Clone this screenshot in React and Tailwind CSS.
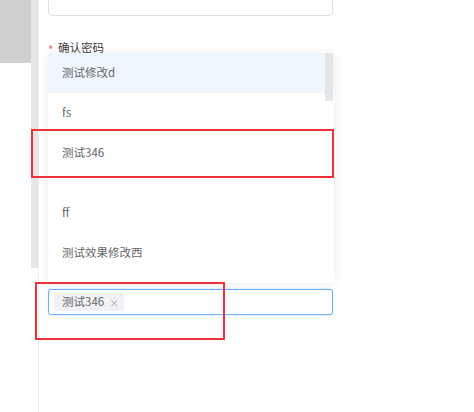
import React from "react";

const font = { fontFamily: '"Noto Sans CJK SC", "Noto Sans", sans-serif' };

export default function App() {
  return (
    <div
      className="relative flex w-[474px] h-[412px] overflow-hidden bg-white text-[#606266]"
      style={font}
    >
      {/* left sidebar */}
      <div className="w-[31px] shrink-0 flex flex-col">
        <div className="h-[63px] bg-[#cfcfcf]" />
      </div>
      <div className="w-[7px] shrink-0 flex flex-col">
        <div className="h-[268px] bg-[#e6e6e6]" />
      </div>
      {/* main */}
      <div className="flex-1 border-l border-[#efefef] pl-[9px] flex flex-col">
        <div className="w-[285px] h-[40px] -mt-[24px] border border-[#dcdfe6] rounded-[4px] bg-white" />
        <div className="mt-[24px] flex items-center h-[16px] text-[11.5px] leading-none">
          <span className="text-[#f56c6c] w-[10px] text-[12px] pt-[3px]">*</span>
          <span className="text-[#404040]">确认密码</span>
        </div>
        <div className="mt-[233px] w-[285px] h-[26px] border border-[#6cb2fb] shadow-[0_0_1px_#409eff] rounded-[3px] flex items-center px-[5px]">
          <div className="h-[18px] bg-[#f0f2f5] rounded-[3px] flex items-center pl-[8px] pr-[5px] gap-[5px] text-[11.5px] text-[#666]">
            <span>测试346</span>
            <span className="text-[#a8abb2] text-[10px]">×</span>
          </div>
        </div>
      </div>

      {/* dropdown */}
      <div className="absolute left-[48px] top-[53px] w-[286px] h-[230px] bg-white shadow-[0_2px_12px_rgba(0,0,0,0.08)] flex flex-col text-[11.5px] text-[#666]">
        <div className="h-[40px] bg-[#eef6fe] flex items-center pl-[14px]">测试修改d</div>
        <div className="h-[40px] flex items-center pl-[14px]">fs</div>
        <div className="h-[40px] flex items-center pl-[14px]">测试346</div>
        <div className="h-[20px]" />
        <div className="h-[40px] flex items-center pl-[14px]">ff</div>
        <div className="h-[40px] flex items-center pl-[14px]">测试效果修改西</div>
        <div className="absolute right-[1px] top-0 w-[8px] h-[48px] bg-[#e6e6e6]" />
      </div>

      {/* annotation boxes */}
      <div className="absolute left-[31px] top-[129px] w-[303px] h-[49px] border-[2.5px] border-[#ee3237]" />
      <div className="absolute left-[35px] top-[282px] w-[190px] h-[58px] border-[2.5px] border-[#ee3237]" />
    </div>
  );
}
